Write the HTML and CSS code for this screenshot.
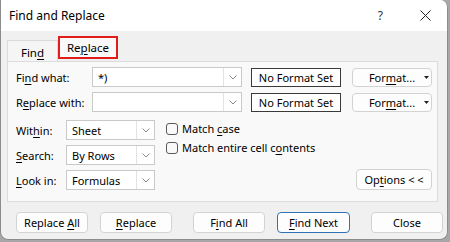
FILE: index.html
```html
<!DOCTYPE html>
<html lang="en">
<head>
  <meta charset="UTF-8">
  <title>Find and Replace</title>
  <link rel="stylesheet" href="styles.css">
</head>
<body>
  <div class="window">
    <div class="titlebar">
      <span class="title">Find and Replace</span>
      <span class="help">?</span>
      <svg class="close-x" width="11" height="11" viewBox="0 0 11 11"><path d="M0.5 0.5 L10.5 10.5 M10.5 0.5 L0.5 10.5" stroke="#222" stroke-width="1" fill="none"/></svg>
    </div>
    <div class="content">
      <div class="tabs">
        <div class="tab"><span>Fin<u>d</u></span></div>
        <div class="tab active"><span>Re<u>p</u>lace</span></div>
      </div>
      <div class="panel">
        <div class="row">
          <label class="label">Fi<u>n</u>d what:</label>
          <div class="combo"><span class="combo-text">*)</span><span class="drop"><svg width="8" height="5" viewBox="0 0 8 5"><polyline points="0.5,0.5 4,4 7.5,0.5" stroke="#8a8a8a" fill="none"/></svg></span></div>
          <div class="noformat">No Format Set</div>
          <div class="btn format"><span>For<u>m</u>at...</span><svg width="5" height="3" viewBox="0 0 5 3"><polygon points="0,0 5,0 2.5,3" fill="#222"/></svg></div>
        </div>
        <div class="row">
          <label class="label">R<u>e</u>place with:</label>
          <div class="combo"><span class="combo-text"></span><span class="drop"><svg width="8" height="5" viewBox="0 0 8 5"><polyline points="0.5,0.5 4,4 7.5,0.5" stroke="#8a8a8a" fill="none"/></svg></span></div>
          <div class="noformat">No Format Set</div>
          <div class="btn format"><span>For<u>m</u>at...</span><svg width="5" height="3" viewBox="0 0 5 3"><polygon points="0,0 5,0 2.5,3" fill="#222"/></svg></div>
        </div>
        <div class="options">
          <div class="selects">
            <div class="srow">
              <label class="slabel">Wit<u>h</u>in:</label>
              <div class="select"><span class="combo-text">Sheet</span><span class="drop"><svg width="8" height="5" viewBox="0 0 8 5"><polyline points="0.5,0.5 4,4 7.5,0.5" stroke="#8a8a8a" fill="none"/></svg></span></div>
            </div>
            <div class="srow">
              <label class="slabel"><u>S</u>earch:</label>
              <div class="select"><span class="combo-text">By Rows</span><span class="drop"><svg width="8" height="5" viewBox="0 0 8 5"><polyline points="0.5,0.5 4,4 7.5,0.5" stroke="#8a8a8a" fill="none"/></svg></span></div>
            </div>
            <div class="srow">
              <label class="slabel"><u>L</u>ook in:</label>
              <div class="select"><span class="combo-text">Formulas</span><span class="drop"><svg width="8" height="5" viewBox="0 0 8 5"><polyline points="0.5,0.5 4,4 7.5,0.5" stroke="#8a8a8a" fill="none"/></svg></span></div>
            </div>
          </div>
          <div class="checks">
            <div class="check"><span class="box"></span><span>Match <u>c</u>ase</span></div>
            <div class="check"><span class="box"></span><span>Match entire cell c<u>o</u>ntents</span></div>
          </div>
          <div class="btn options-btn"><span>Op<u>t</u>ions &lt; &lt;</span></div>
        </div>
      </div>
      <div class="buttons">
        <div class="btn action"><span>Replace <u>A</u>ll</span></div>
        <div class="btn action gap-s"><span><u>R</u>eplace</span></div>
        <div class="btn action gap-l"><span>F<u>i</u>nd All</span></div>
        <div class="btn action gap-s focus"><span><u>F</u>ind Next</span></div>
        <div class="btn action gap-l"><span>Close</span></div>
      </div>
    </div>
  </div>
</body>
</html>
```

FILE: styles.css
```css
/* Dialog window */
body {
  margin: 0;
  background-color: #a8a8a8;
  font-family: "Noto Sans", "Open Sans", sans-serif;
  font-size: 11px;
  color: #000;
}
u {
  text-decoration-thickness: 1px;
  text-underline-offset: 2px;
}
.window {
  width: 446px;
  height: 239px;
  border: 1px solid #8c8c8c;
  border-top: none;
  border-radius: 0 8px 8px 8px;
  overflow: hidden;
  background-color: #f0f0f0;
}
.titlebar {
  height: 31px;
  background-color: #fff;
  display: flex;
  align-items: center;
  padding-left: 8px;
}
.title {
  font-size: 12px;
  flex: 1;
}
.help {
  font-size: 12px;
  margin-right: 37px;
  color: #333;
}
.close-x {
  margin-right: 16px;
}
.content {
  padding-left: 6px;
}

/* Tabs */
.tabs {
  display: flex;
  align-items: flex-end;
  height: 30px;
}
.tab {
  height: 21px;
  width: 51px;
  box-sizing: border-box;
  border: 1px solid #dadada;
  border-bottom: none;
  background-color: #f5f5f5;
  display: flex;
  align-items: center;
  justify-content: center;
  font-size: 11.5px;
  padding-top: 2px;
}
.tab.active {
  height: 23px;
  width: 60px;
  border: 2px solid #e21b1b;
  background-color: #f9f9f9;
  margin-bottom: 2px;
  padding-top: 0;
}

/* Panel */
.panel {
  width: 431px;
  height: 141px;
  box-sizing: border-box;
  border: 1px solid #dcdcdc;
  background-color: #f9f9f9;
  padding: 5px 5px 0 8px;
}
.row {
  display: flex;
  height: 20px;
  margin-bottom: 5px;
  align-items: center;
}
.label {
  width: 76px;
}
.combo, .select {
  height: 20px;
  box-sizing: border-box;
  border: 1px solid #c9c9c9;
  background-color: #fff;
  display: flex;
  align-items: center;
}
.combo {
  width: 150px;
}
.combo-text {
  flex: 1;
  padding-left: 5px;
}
.drop {
  width: 17px;
  height: 18px;
  border-left: 1px solid #e3e3e3;
  display: flex;
  align-items: center;
  justify-content: center;
}
.noformat {
  width: 90px;
  height: 19px;
  box-sizing: border-box;
  border: 1px solid #3a3a3a;
  background-color: #fff;
  margin-left: 9px;
  display: flex;
  align-items: center;
  justify-content: center;
}
.btn {
  box-sizing: border-box;
  background-color: #fdfdfd;
  border: 1px solid #d3d3d3;
  border-radius: 4px;
  display: flex;
  align-items: center;
  justify-content: center;
}
.format {
  width: 80px;
  height: 19px;
  margin-left: 11px;
  gap: 9px;
  padding-left: 14px;
}

/* Search options */
.options {
  display: flex;
  margin-top: 8px;
}
.srow {
  display: flex;
  align-items: center;
  margin-bottom: 5px;
}
.slabel {
  width: 50px;
}
.select {
  width: 89px;
}
.checks {
  margin-left: 11px;
  padding-top: 1px;
}
.check {
  display: flex;
  align-items: center;
  height: 15px;
  margin-bottom: 4px;
}
.box {
  width: 12px;
  height: 12px;
  box-sizing: border-box;
  border: 1px solid #5a5a5a;
  border-radius: 3px;
  margin-right: 4px;
}
.options-btn {
  width: 76px;
  height: 21px;
  margin-left: auto;
  align-self: flex-end;
  margin-bottom: 5px;
}

/* Bottom buttons */
.buttons {
  display: flex;
  margin-top: 10px;
  padding-left: 9px;
}
.action {
  width: 72px;
  height: 21px;
}
.gap-s {
  margin-left: 12px;
}
.gap-l {
  margin-left: 21px;
}
.focus {
  width: 73px;
  border-color: #2f73b5;
}
```
